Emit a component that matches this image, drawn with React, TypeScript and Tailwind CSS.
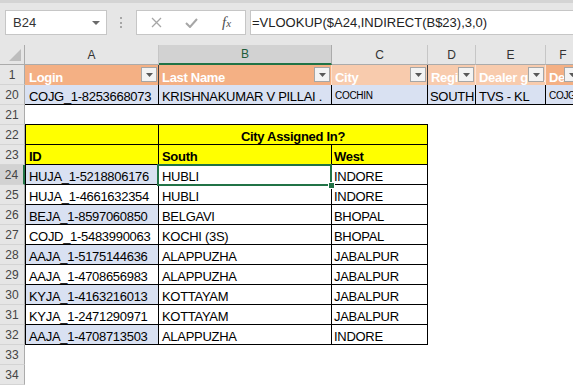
import React from 'react';

// column boundaries taken from the sheet: row head 0-25, A 25-159, B 159-332, C 332-428, D 428-476, E 476-546
const cellBase = 'h-full shrink-0 overflow-hidden whitespace-nowrap flex items-end leading-[15px] tracking-[-0.3px]';

const data = [
  { n: 24, id: 'HUJA_1-5218806176', south: 'HUBLI', west: 'INDORE' },
  { n: 25, id: 'HUJA_1-4661632354', south: 'HUBLI', west: 'INDORE' },
  { n: 26, id: 'BEJA_1-8597060850', south: 'BELGAVI', west: 'BHOPAL' },
  { n: 27, id: 'COJD_1-5483990063', south: 'KOCHI (3S)', west: 'BHOPAL' },
  { n: 28, id: 'AAJA_1-5175144636', south: 'ALAPPUZHA', west: 'JABALPUR' },
  { n: 29, id: 'AAJA_1-4708656983', south: 'ALAPPUZHA', west: 'JABALPUR' },
  { n: 30, id: 'KYJA_1-4163216013', south: 'KOTTAYAM', west: 'JABALPUR' },
  { n: 31, id: 'KYJA_1-2471290971', south: 'KOTTAYAM', west: 'JABALPUR' },
  { n: 32, id: 'AAJA_1-4708713503', south: 'ALAPPUZHA', west: 'INDORE' },
];

function RowNum({ n, active }: { n: number; active?: boolean }) {
  return (
    <div
      className={`w-[25px] shrink-0 h-full flex items-center justify-center pt-[1px] text-[12px] text-[#444] border-b border-b-[#D4D4D4] ${
        active ? 'bg-[#D2D2D2] border-r-2 border-r-[#217346]' : 'bg-[#E6E6E6] border-r border-r-[#ABABAB]'
      }`}
    >
      {n}
    </div>
  );
}

function FilterBtn() {
  return (
    <span className="absolute right-[1px] top-[2px] w-[16px] h-[15px] bg-[#F3F3F3] border border-[#A6A6A6] flex items-center justify-center">
      <svg width="7" height="4" viewBox="0 0 7 4">
        <path d="M0 0h7L3.5 4z" fill="#595959" />
      </svg>
    </span>
  );
}

function Row({ children }: { children: React.ReactNode }) {
  return <div className="flex h-[20px] shrink-0">{children}</div>;
}

export default function App() {
  return (
    <div className="w-[573px] h-[385px] overflow-hidden bg-white font-['Liberation_Sans',Arial,sans-serif] text-[13px] text-black flex flex-col">
      {/* formula bar */}
      <div className="h-[45px] shrink-0 bg-[#E6E6E6] flex flex-col">
        <div className="h-[3px] bg-[#D4D4D4]" />
        <div className="flex items-center mt-[7px] h-[25px]">
          <div className="ml-[5px] w-[102px] h-[25px] bg-white border border-[#C6C6C6] flex items-center justify-between pl-[7px] pr-[6px] text-[#333]">
            <span>B24</span>
            <svg width="8" height="4" viewBox="0 0 8 4">
              <path d="M0 0h8L4 4z" fill="#6A6A6A" />
            </svg>
          </div>
          <div className="ml-[13px] w-[2px] flex flex-col gap-[2.5px]">
            <span className="w-[2px] h-[2px] bg-[#A6A6A6]" />
            <span className="w-[2px] h-[2px] bg-[#A6A6A6]" />
            <span className="w-[2px] h-[2px] bg-[#A6A6A6]" />
          </div>
          <div className="ml-[14px] w-[110px] h-[25px] bg-white border border-[#C6C6C6] flex items-center">
            <svg className="ml-[14px]" width="11" height="11" viewBox="0 0 11 11">
              <path d="M1 1L10 10M10 1L1 10" stroke="#A6A6A6" strokeWidth="1.3" />
            </svg>
            <svg className="ml-[23px]" width="13" height="10" viewBox="0 0 13 10">
              <path d="M1 5L5 9L12 1" stroke="#A6A6A6" strokeWidth="2" fill="none" />
            </svg>
            <span className="ml-[24px] font-['Liberation_Serif',serif] italic text-[15px] text-[#505050] leading-none">
              f<span className="text-[11px]">x</span>
            </span>
          </div>
          <div className="ml-[4px] flex-1 h-[25px] bg-white border border-[#C6C6C6] border-r-0 flex items-center pl-[1px] text-[#222] whitespace-nowrap">
            =VLOOKUP($A24,INDIRECT(B$23),3,0)
          </div>
        </div>
      </div>

      {/* column headers */}
      <Row>
        <div className="w-[25px] shrink-0 bg-[#E6E6E6] border-r border-r-[#ABABAB] border-b border-b-[#ABABAB] flex items-end justify-end pr-[3px] pb-[3px]">
          <svg width="12" height="12" viewBox="0 0 12 12">
            <path d="M12 0V12H0Z" fill="#BDBDBD" />
          </svg>
        </div>
        <div className="w-[134px] shrink-0 bg-[#E6E6E6] border-r border-r-[#C6C6C6] border-b border-b-[#ABABAB] flex items-center justify-center text-[12px] text-[#333]">A</div>
        <div className="w-[173px] shrink-0 bg-[#D2D2D2] border-r border-r-[#ABABAB] border-b-2 border-b-[#217346] flex items-center justify-center text-[12px] text-[#1E5E3A]">B</div>
        <div className="w-[96px] shrink-0 bg-[#E6E6E6] border-r border-r-[#C6C6C6] border-b border-b-[#ABABAB] flex items-center justify-center text-[12px] text-[#333]">C</div>
        <div className="w-[48px] shrink-0 bg-[#E6E6E6] border-r border-r-[#C6C6C6] border-b border-b-[#ABABAB] flex items-center justify-center text-[12px] text-[#333]">D</div>
        <div className="w-[70px] shrink-0 bg-[#E6E6E6] border-r border-r-[#C6C6C6] border-b border-b-[#ABABAB] flex items-center justify-center text-[12px] text-[#333]">E</div>
        <div className="w-[35px] shrink-0 bg-[#E6E6E6] border-r border-r-[#C6C6C6] border-b border-b-[#ABABAB] flex items-center justify-center text-[12px] text-[#333]">F</div>
        <div className="flex-1 bg-[#E6E6E6] border-b border-b-[#ABABAB]" />
      </Row>

      {/* row 1: table headers */}
      <Row>
        <RowNum n={1} />
        <div className={`${cellBase} relative w-[134px] bg-[#F4B084] border-r border-r-[#404040] pl-[4px] font-bold text-white`}>
          Login
          <FilterBtn />
        </div>
        <div className={`${cellBase} relative w-[173px] bg-[#F4B084] border-r border-r-[#FBE0CC] pl-[3px] font-bold text-white`}>
          Last Name
          <FilterBtn />
        </div>
        <div className={`${cellBase} relative w-[96px] bg-[#F8CBAD] border-r border-r-[#404040] pl-[3px] font-bold text-white`}>
          City
          <FilterBtn />
        </div>
        <div className={`${cellBase} relative w-[48px] bg-[#F8CBAD] border-r border-r-[#FCE4D6] pl-[3px] font-bold text-white`}>
          Region
          <FilterBtn />
        </div>
        <div className={`${cellBase} relative w-[70px] bg-[#F8CBAD] border-r border-r-[#FCE4D6] pl-[3px] font-bold text-white`}>
          Dealer group
          <FilterBtn />
        </div>
        <div className={`${cellBase} relative w-[35px] bg-[#F4B084] pl-[3px] font-bold text-white`}>
          Dealer
          <FilterBtn />
        </div>
      </Row>

      {/* row 20 */}
      <Row>
        <RowNum n={20} />
        <div className={`${cellBase} w-[134px] bg-[#D9E1F2] border-r border-b border-black pl-[4px]`}>COJG_1-8253668073</div>
        <div className={`${cellBase} w-[173px] bg-[#D9E1F2] border-r border-b border-black pl-[3px]`}>KRISHNAKUMAR V PILLAI .</div>
        <div className={`${cellBase} w-[96px] bg-[#D9E1F2] border-r border-b border-black pl-[3px] text-[10px] pb-[1px]`}>COCHIN</div>
        <div className={`${cellBase} w-[48px] bg-[#D9E1F2] border-r border-b border-black pl-[2px]`}>SOUTH</div>
        <div className={`${cellBase} w-[70px] bg-[#D9E1F2] border-r border-b border-black pl-[3px]`}>TVS - KL</div>
        <div className={`${cellBase} w-[35px] bg-[#D9E1F2] border-b border-black pl-[3px] text-[10px] pb-[1px]`}>COJG_1</div>
        <div className="flex-1 h-full border-b border-black" />
      </Row>

      {/* row 21 */}
      <Row>
        <RowNum n={21} />
        <div className="w-[403px] shrink-0 h-full border-b border-black" />
      </Row>

      {/* row 22 */}
      <Row>
        <RowNum n={22} />
        <div className={`${cellBase} w-[134px] bg-[#FFFF00] border-l border-r border-b border-black`} />
        <div className={`${cellBase} w-[269px] bg-[#FFFF00] border-r border-b border-black justify-center font-bold`}>
          City Assigned In?
        </div>
      </Row>

      {/* row 23 */}
      <Row>
        <RowNum n={23} />
        <div className={`${cellBase} w-[134px] bg-[#FFFF00] border-l border-r border-b border-black pl-[3px] font-bold`}>ID</div>
        <div className={`${cellBase} w-[173px] bg-[#FFFF00] border-r border-b border-black pl-[3px] font-bold`}>South</div>
        <div className={`${cellBase} w-[96px] bg-[#FFFF00] border-r border-b border-black pl-[2px] font-bold`}>West</div>
      </Row>

      {data.map((r) => (
        <Row key={r.n}>
          <RowNum n={r.n} active={r.n === 24} />
          <div
            className={`${cellBase} w-[134px] border-l border-r border-b border-black pl-[3px] ${
              r.n % 2 === 0 ? 'bg-[#D9E1F2]' : 'bg-white'
            }`}
          >
            {r.id}
          </div>
          <div className={`${cellBase} relative w-[173px] border-r border-b border-black pl-[3px] !overflow-visible`}>
            {r.south}
            {r.n === 24 && (
              <span className="absolute z-10 left-[-2px] top-[-1px] w-[175px] h-[22px] border-2 border-[#217346]">
                <span className="absolute right-[-5px] bottom-[-5px] w-[7px] h-[7px] bg-[#217346] border border-white" />
              </span>
            )}
          </div>
          <div className={`${cellBase} w-[96px] border-r border-b border-black pl-[2px]`}>{r.west}</div>
        </Row>
      ))}

      <Row>
        <RowNum n={33} />
      </Row>
      <Row>
        <RowNum n={34} />
      </Row>
    </div>
  );
}
